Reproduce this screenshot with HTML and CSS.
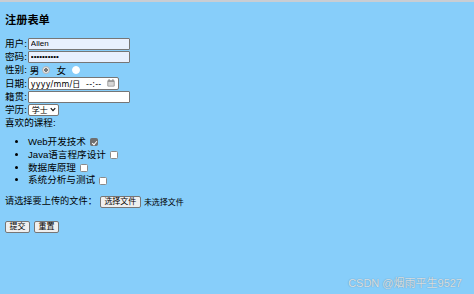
FILE: index.html
```html
<!DOCTYPE html>
<html lang="zh-CN">
<head>
<meta charset="utf-8">
<title>注册表单</title>
<link rel="stylesheet" href="styles.css">
</head>
<body>
<div class="page">
  <h3 class="title">注册表单</h3>
  <form class="form">
    <div class="row"><span class="label">用户:</span><input class="field autofill" type="text" value="Allen"></div>
    <div class="row"><span class="label">密码:</span><input class="field autofill" type="password" value="1234567890"></div>
    <div class="row"><span class="label">性别:</span><span class="opt">男</span><input class="radio" type="radio" name="sex" checked><span class="opt">女</span><input class="radio" type="radio" name="sex"></div>
    <div class="row row-date"><span class="label">日期:</span>
      <span class="date"><span class="date-text">yyyy/mm/日&nbsp;&nbsp;--:--</span>
        <svg class="cal" viewBox="0 0 10 10" width="8" height="8"><rect x="0.5" y="1.5" width="9" height="8" rx="1" fill="#8a8a8a"/><rect x="1.5" y="3.5" width="7" height="5" fill="#d6d6d6"/><rect x="2" y="0" width="1.2" height="2.5" fill="#8a8a8a"/><rect x="6.8" y="0" width="1.2" height="2.5" fill="#8a8a8a"/></svg>
      </span>
    </div>
    <div class="row"><span class="label">籍贯:</span><input class="field" type="text"></div>
    <div class="row"><span class="label">学历:</span>
      <span class="select">学士<svg class="chev" viewBox="0 0 8 6" width="6" height="5"><path d="M1 1.2 L4 4.4 L7 1.2" fill="none" stroke="#111" stroke-width="1.6"/></svg></span>
    </div>
    <div class="row"><span class="label">喜欢的课程:</span></div>
    <ul class="courses">
      <li><span>Web开发技术</span><input class="check" type="checkbox" checked></li>
      <li><span>Java语言程序设计</span><input class="check" type="checkbox"></li>
      <li><span>数据库原理</span><input class="check" type="checkbox"></li>
      <li><span>系统分析与测试</span><input class="check" type="checkbox"></li>
    </ul>
    <div class="row file-row"><span class="label file-label">请选择要上传的文件：</span><span class="btn file-btn">选择文件</span><span class="file-name">未选择文件</span></div>
    <div class="row actions"><span class="btn">提交</span><span class="btn">重置</span></div>
  </form>
</div>
<div class="watermark">CSDN @烟雨平生9527</div>
</body>
</html>
```
FILE: styles.css
```css
html {
  background: #87cefa;
  border-top: 2px solid #c9cdd3;
  height: 100%;
  box-sizing: border-box;
}
body {
  margin: 0;
  font-family: "Liberation Sans", "Noto Sans CJK SC", sans-serif;
  font-size: 9.6px;
  color: #000;
  position: relative;
  min-height: 100%;
}
.page {
  padding: 0 5px;
}
.title {
  font-size: 11.2px;
  font-weight: bold;
  line-height: 13px;
  margin: 0;
  padding-top: 12px;
  padding-bottom: 10px;
}
.form {
  margin: 0;
}
.row {
  display: flex;
  align-items: center;
  height: 13px;
  white-space: nowrap;
}
.row-date {
  height: 14px;
}
.label {
  line-height: 13px;
}
.field {
  box-sizing: border-box;
  width: 102px;
  height: 12px;
  margin: 0 0 0 1px;
  padding: 0 2px;
  border: 1px solid #767676;
  border-radius: 1px;
  background: #fff;
  font-family: "Liberation Sans", sans-serif;
  font-size: 8px;
  color: #000;
  outline: none;
}
.field.autofill {
  background: #e8f0fe;
}
.opt {
  margin-left: 3px;
}
.radio {
  appearance: none;
  -webkit-appearance: none;
  box-sizing: border-box;
  width: 8px;
  height: 8px;
  margin: 0 3px 0 3px;
  border-radius: 50%;
  border: 1px solid #fff;
  background: #fff;
}
.radio:checked {
  border-color: #b5b5b5;
  background: radial-gradient(circle, #7a7a7a 0 1.6px, #e6e6e6 2px);
}
.radio:last-child {
  margin-left: 6px;
}
.date {
  box-sizing: border-box;
  display: flex;
  align-items: center;
  justify-content: space-between;
  width: 91px;
  height: 13px;
  margin-left: 1px;
  padding: 0 3px 0 2px;
  border: 1px solid #767676;
  border-radius: 2px;
  background: #fff;
}
.date-text {
  font-family: "DejaVu Sans", "Noto Sans CJK SC", sans-serif;
  font-size: 8px;
  letter-spacing: 0.2px;
  color: #000;
}
.cal {
  display: block;
}
.select {
  box-sizing: border-box;
  display: flex;
  align-items: center;
  gap: 2px;
  height: 12px;
  margin-left: 1px;
  padding: 0 2px 0 3px;
  border: 1px solid #767676;
  border-radius: 2px;
  background: #fff;
  font-size: 8px;
}
.chev {
  display: block;
}
.courses {
  margin: 7px 0 8px;
  padding-left: 23px;
  list-style: disc;
}
.courses li {
  height: 12.8px;
  line-height: 12.8px;
  font-size: 9.6px;
}
.courses li span,
.courses li input {
  vertical-align: middle;
}
.check {
  appearance: none;
  -webkit-appearance: none;
  box-sizing: border-box;
  position: relative;
  width: 8px;
  height: 8px;
  margin: 0 0 0 4px;
  border: 1px solid #8a8a8a;
  border-radius: 1.5px;
  background: #fff;
}
.check:checked {
  background: #6f6f6f;
  border-color: #6f6f6f;
}
.check:checked::after {
  content: "";
  position: absolute;
  left: 1.6px;
  top: 0.2px;
  width: 2px;
  height: 4px;
  border: solid #fff;
  border-width: 0 1.2px 1.2px 0;
  transform: rotate(40deg);
}
.btn {
  box-sizing: border-box;
  display: inline-flex;
  align-items: center;
  height: 12px;
  padding: 0 3.5px;
  border: 1px solid #767676;
  border-radius: 2px;
  background: #efefef;
  font-size: 8px;
  line-height: 10px;
}
.file-row {
  margin-bottom: 12px;
}
.file-label {
  font-size: 9.2px;
}
.file-btn {
  margin-left: 3px;
}
.file-name {
  margin-left: 3px;
  font-size: 8px;
}
.actions {
  gap: 4px;
}
.watermark {
  position: absolute;
  right: 12px;
  bottom: 4px;
  font-family: "Liberation Sans", "Noto Sans CJK SC", sans-serif;
  font-size: 11px;
  color: rgba(255, 255, 255, 0.75);
  text-shadow: 0 0 1px rgba(60, 60, 60, 0.6);
}
```
